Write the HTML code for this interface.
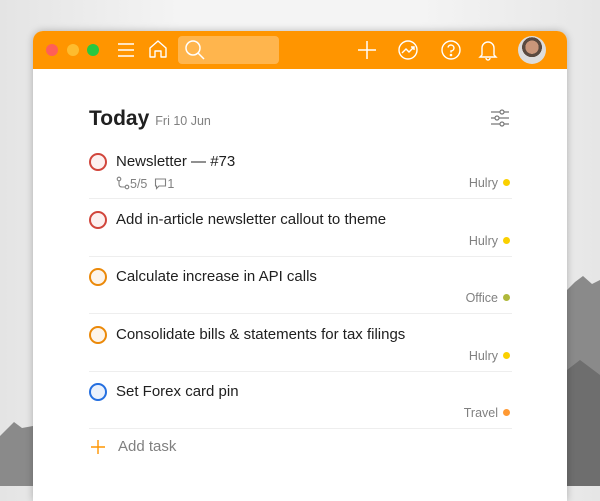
<!DOCTYPE html>
<html><head><style>
*{margin:0;padding:0;box-sizing:border-box}
body{width:600px;height:486px;overflow:hidden;background:linear-gradient(90deg,#e4e4e4,#f4f4f4 30%,#f4f4f4 70%,#e6e6e6);font-family:"Liberation Sans",sans-serif;position:relative}
.win{position:absolute;left:33px;top:31px;width:534px;height:470px;background:#fff;border-radius:10px 10px 0 0;overflow:hidden;box-shadow:0 0 8px rgba(0,0,0,.25)}
.hdr{height:38px;background:#ff9500;position:relative}
.dot{position:absolute;top:13px;width:12px;height:12px;border-radius:50%}
.search{position:absolute;left:145px;top:5px;width:101px;height:28px;background:rgba(255,255,255,.3);border-radius:4px}
svg{position:absolute}
.title{position:absolute;left:56px;top:76px;font-size:21px;font-weight:bold;color:#202020}
.date{font-size:12.5px;font-weight:normal;color:#808080;margin-left:6px}
.task{position:absolute;left:56px;width:423px;height:58px;border-bottom:1px solid #eee}
.c{position:absolute;left:0;top:12px;width:18px;height:18px;border-radius:50%;border:2px solid}
.t{position:absolute;left:27px;top:12px;font-size:15px;color:#202020}
.p{position:absolute;right:2px;top:35px;font-size:12.5px;color:#808080}
.p i{display:inline-block;width:7px;height:7px;border-radius:50%;margin-left:5px;vertical-align:1px}
</style></head><body>
<svg width="600" height="486" style="left:0;top:0">
<polygon points="567,290 575,282 583,276 592,284 600,280 600,486 567,486" fill="#8a8a8a"/>
<polygon points="567,370 580,360 600,375 600,486 567,486" fill="#6e6e6e"/>
<polygon points="0,436 8,428 14,422 22,428 33,426 33,486 0,486" fill="#8a8a8a"/>
</svg>
<div class="win">
<div class="hdr">
<div class="dot" style="left:13px;background:#ff5f57"></div>
<div class="dot" style="left:34px;background:#febc2e"></div>
<div class="dot" style="left:54px;background:#28c840"></div>
<svg width="20" height="20" style="left:83px;top:9px" stroke="#fff" stroke-width="1.4" fill="none"><path d="M2 4H18M2 10H18M2 16H18"/></svg>
<svg width="20" height="20" style="left:115px;top:8px" stroke="#fff" stroke-width="1.4" fill="none" stroke-linejoin="round"><path d="M2 9L10 2L18 9V18H13V12H7V18H2Z"/></svg>
<div class="search"></div>
<svg width="22" height="22" style="left:151px;top:8px" stroke="#fff" stroke-width="1.5" fill="none"><circle cx="9" cy="9" r="7"/><path d="M14 14L20 20"/></svg>
<svg width="20" height="20" style="left:324px;top:9px" stroke="#fff" stroke-width="1.5"><path d="M10 1V19M1 10H19"/></svg>
<svg width="22" height="22" style="left:364px;top:8px" stroke="#fff" stroke-width="1.4" fill="none"><circle cx="11" cy="11" r="9"/><path d="M5 14L9 10L12 13L17 8M14 8H17V11"/></svg>
<svg width="22" height="22" style="left:407px;top:8px" stroke="#fff" stroke-width="1.4" fill="none"><circle cx="11" cy="11" r="9"/><path d="M8 8.5A3 3 0 1 1 11 12V13.5"/><circle cx="11" cy="16" r=".6" fill="#fff"/></svg>
<svg width="22" height="22" style="left:444px;top:8px" stroke="#fff" stroke-width="1.4" fill="none"><path d="M5 16V9A6 6 0 0 1 17 9V16L19 18H3Z M9 19A2 2 0 0 0 13 19"/></svg>
<div style="position:absolute;left:485px;top:5px;width:28px;height:28px;border-radius:50%;background:radial-gradient(circle at 50% 40%,#c9967a 0 30%,#5a4a40 31% 45%,#ddd 46%)"></div>
</div>
<div class="title">Today<span class="date">Fri 10 Jun</span></div>
<svg width="20" height="18" style="left:457px;top:78px" stroke="#777" stroke-width="1.2" fill="#fff"><path d="M1 3H19M1 9H19M1 15H19"/><circle cx="12" cy="3" r="2"/><circle cx="7" cy="9" r="2"/><circle cx="12" cy="15" r="2"/></svg>

<div class="task" style="top:110px"><div class="c" style="border-color:#d1453b;background:#fdf0ef"></div><div class="t">Newsletter — #73</div>
<div style="position:absolute;left:27px;top:35px;font-size:12.5px;color:#808080"><svg width="14" height="14" style="position:relative;display:inline-block;vertical-align:-2px" stroke="#808080" stroke-width="1.1" fill="none"><circle cx="3" cy="3" r="1.8"/><circle cx="11" cy="11" r="1.8"/><path d="M3 5V8Q3 11 6 11H9"/></svg>5/5 &nbsp;<svg width="13" height="13" style="position:relative;display:inline-block;vertical-align:-2px" stroke="#808080" stroke-width="1.1" fill="none"><path d="M1.5 2H11.5V9H5L2.5 11.5V9H1.5Z"/></svg>1</div>
<div class="p">Hulry<i style="background:#fad000"></i></div></div>
<div class="task" style="top:168px"><div class="c" style="border-color:#d1453b;background:#fdf0ef"></div><div class="t">Add in-article newsletter callout to theme</div><div class="p">Hulry<i style="background:#fad000"></i></div></div>
<div class="task" style="top:225px"><div class="c" style="border-color:#eb8909;background:#fdf4ea"></div><div class="t">Calculate increase in API calls</div><div class="p">Office<i style="background:#afb83b"></i></div></div>
<div class="task" style="top:283px"><div class="c" style="border-color:#eb8909;background:#fdf4ea"></div><div class="t">Consolidate bills &amp; statements for tax filings</div><div class="p">Hulry<i style="background:#fad000"></i></div></div>
<div class="task" style="top:340px"><div class="c" style="border-color:#246fe0;background:#eaf1fc"></div><div class="t">Set Forex card pin</div><div class="p">Travel<i style="background:#ff9933"></i></div></div>
<svg width="14" height="14" style="left:58px;top:409px" stroke="#ff9500" stroke-width="1.4"><path d="M7 0V14M0 7H14"/></svg>
<div style="position:absolute;left:85px;top:407px;font-size:15px;color:#808080">Add task</div>
</div>
</body></html>
